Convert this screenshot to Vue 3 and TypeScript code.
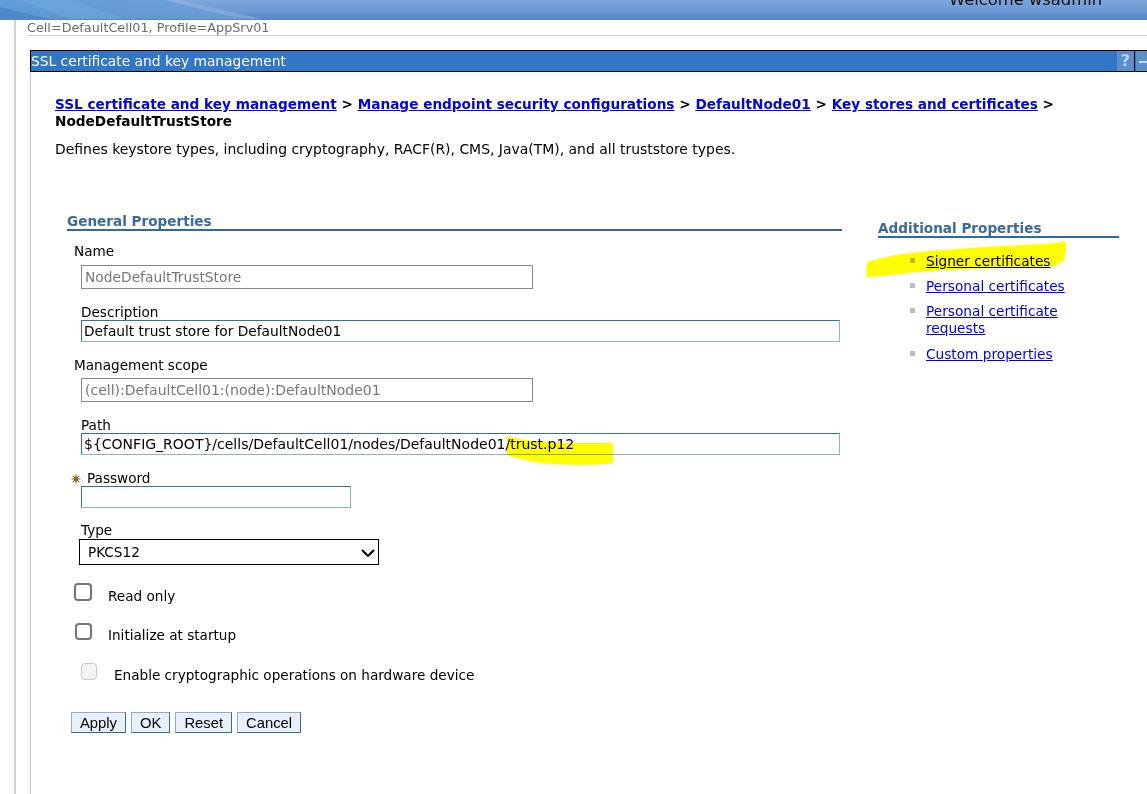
<script setup lang="ts">
const crumbs: string[] = [
  'SSL certificate and key management',
  'Manage endpoint security configurations',
  'DefaultNode01',
  'Key stores and certificates',
]
const links: string[] = ['Signer certificates', 'Personal certificates', 'Personal certificate requests', 'Custom properties']
const buttons: string[] = ['Apply', 'OK', 'Reset', 'Cancel']
</script>

<template>
  <div class="page">
    <header class="banner">
      <svg class="swoosh" width="300" height="19" viewBox="0 0 300 19" aria-hidden="true">
        <defs>
          <linearGradient id="fade" x1="0" y1="0" x2="1" y2="0">
            <stop offset="0" stop-color="#5a9ad4" />
            <stop offset="1" stop-color="#6c9fd8" />
          </linearGradient>
        </defs>
        <path d="M0 0H165L240 19H0Z" fill="url(#fade)" opacity=".75" />
        <path d="M165 0H180L262 19H240Z" fill="#9dbde4" opacity=".45" />
        <path d="M20 0H70L125 19H70Z" fill="#72aede" opacity=".4" />
        <path d="M0 7 50 19H0Z" fill="#4a86c6" opacity=".8" />
      </svg>
      <span class="welcome">Welcome wsadmin</span>
    </header>
    <div class="shell">
      <div class="context">Cell=DefaultCell01, Profile=AppSrv01</div>
      <section class="panel">
        <div class="titlebar">
          <span class="title">SSL certificate and key management</span>
          <span class="tool help">?</span>
          <span class="tool min"><i></i></span>
        </div>
        <div class="body">
          <nav class="crumbs">
            <template v-for="c in crumbs" :key="c"><a href="#">{{ c }}</a> &gt; </template>
            <span>NodeDefaultTrustStore</span>
          </nav>
          <p class="desc">Defines keystore types, including cryptography, RACF(R), CMS, Java(TM), and all truststore types.</p>
          <div class="columns">
            <form class="general" @submit.prevent>
              <h2 class="heading">General Properties</h2>
              <div class="field f-name">
                <label class="out">Name</label>
                <input class="ro" readonly value="NodeDefaultTrustStore" />
              </div>
              <div class="field f-desc">
                <label>Description</label>
                <input class="wide" value="Default trust store for DefaultNode01" />
              </div>
              <div class="field f-scope">
                <label class="out">Management scope</label>
                <input class="ro" readonly value="(cell):DefaultCell01:(node):DefaultNode01" />
              </div>
              <div class="field f-path">
                <label>Path</label>
                <input class="wide" value="${CONFIG_ROOT}/cells/DefaultCell01/nodes/DefaultNode01/trust.p12" />
              </div>
              <div class="field f-pass">
                <label class="req">
                  <svg class="star" viewBox="0 0 10 10" width="10" height="10" aria-hidden="true">
                    <path d="M5 .5V9.5M.5 5H9.5M1.8 1.8 8.2 8.2M8.2 1.8 1.8 8.2" stroke="#7a6a20" stroke-width="1.2" />
                    <circle cx="5" cy="5" r="2" fill="#7a6a20" />
                  </svg>
                  Password
                </label>
                <input class="pass" type="password" />
              </div>
              <div class="field f-type">
                <label>Type</label>
                <div class="sel-wrap">
                  <select class="sel"><option>PKCS12</option></select>
                  <svg class="chev" viewBox="0 0 14 8" width="14" height="8" aria-hidden="true">
                    <path d="M1 1 7 7 13 1" fill="none" stroke="#000" stroke-width="2" />
                  </svg>
                </div>
              </div>
              <div class="check c1"><input type="checkbox" /><span>Read only</span></div>
              <div class="check c2"><input type="checkbox" /><span>Initialize at startup</span></div>
              <div class="check c3"><input type="checkbox" disabled /><span>Enable cryptographic operations on hardware device</span></div>
              <div class="actions">
                <button v-for="b in buttons" :key="b" type="button">{{ b }}</button>
              </div>
            </form>
            <aside class="additional">
              <h2 class="heading">Additional Properties</h2>
              <ul>
                <li v-for="l in links" :key="l"><a href="#">{{ l }}</a></li>
              </ul>
            </aside>
          </div>
        </div>
      </section>
    </div>
    <svg class="marker" width="1147" height="794" viewBox="0 0 1147 794" aria-hidden="true">
      <path d="M867 262C880 258 895 255 910 253 935 250 960 249 983 247 1010 245 1040 245 1063 242L1066 241 1065 258C1064 262 1058 265 1050 267 1030 268 1005 267 983 268 960 269 940 270 917 272 900 274 885 276 870 277L866 277Z" fill="#ffff00" />
      <path d="M507 436C520 440 545 443 570 443L613 443 613 463C590 466 560 465 540 463 528 461 515 458 507 455Z" fill="#ffff00" />
    </svg>
  </div>
</template>

<style>
html, body { margin: 0; background: #fff; overflow: hidden; }
</style>

<style scoped>
.page { position: relative; width: 1147px; height: 794px; overflow: hidden; font-family: "DejaVu Sans", Verdana, sans-serif; font-size: 13px; color: #000; background: #fff; }
.banner { height: 19px; border-bottom: 1px solid #5f86bd; background: linear-gradient(180deg, #7ea6dc 0%, #6c98d4 60%, #5585c8 100%); position: relative; overflow: hidden; }
.swoosh { position: absolute; left: 0; top: 0; }
.welcome { position: absolute; left: 949px; top: -10px; font-size: 16.35px; line-height: 20px; white-space: nowrap; color: #111; }
.shell { margin-left: 14px; border-left: 2px solid #d0d0d0; height: 774px; box-sizing: border-box; padding-left: 14px; }
.context { margin-left: -3px; height: 15px; line-height: 16px; border-bottom: 1px solid #ccc; color: #6b6b6b; font-size: 12.8px; }
.panel { margin: 14px -21px 0 0; border-left: 1px solid #c8c8c8; height: 800px; }
.titlebar { display: flex; align-items: stretch; height: 20px; background: #3277c7; border: solid #000; border-width: 1px 0; margin-left: -1px; border-left: 1px solid #000; color: #fff; }
.title { flex: 1; line-height: 21px; font-size: 13.8px; }
.tool { width: 17px; background: #5b8fc9; color: #b9d2ec; font-weight: bold; text-align: center; line-height: 20px; font-size: 16px; border-left: 1px solid #3277c7; }
.help { border-right: 1px solid #000; }
.min { width: 32px; position: relative; }
.min i { position: absolute; left: 3px; top: 10px; width: 9px; height: 2px; background: #c3d8ef; }
.body { padding: 24px 28px 0 24px; }
.crumbs { width: 1010px; font-weight: bold; font-size: 13.65px; line-height: 17px; }
a { color: #0000ee; text-decoration: underline; }
.desc { margin: 10px 0 0; font-size: 13.95px; line-height: 18px; }
.columns { display: flex; margin-top: 55px; }
.general { width: 775px; margin-left: 12px; flex: none; }
.additional { width: 241px; margin-left: 36px; margin-top: 7px; flex: none; }
.heading { margin: 0; height: 16px; font-size: 13.6px; line-height: 17px; font-weight: bold; color: #3a6a9c; border-bottom: 2px solid #33699c; }
ul { list-style: none; margin: 15px 0 0; padding: 0 0 0 48px; }
li { position: relative; font-size: 13.7px; line-height: 17px; margin-bottom: 8px; width: 145px; }
li:last-child { margin-top: 9px; }
li::before { content: ""; position: absolute; left: -16px; top: 5px; width: 5px; height: 5px; background: #bdbdbd; }
.field { margin-left: 14px; }
label { display: block; font-size: 13.6px; line-height: 14px; }
label.out { margin-left: -7px; }
input { box-sizing: border-box; font: inherit; margin: 0; display: block; outline: none; }
.ro { width: 452px; height: 24px; border: 1px solid #8a8a8a; background: #fff; color: #777; padding: 0 3px; font-size: 13.8px; }
.wide { width: 759px; height: 22px; border: 1px solid #3d6d9f; border-right-color: #8fb0d0; border-bottom-color: #8fb0d0; padding: 0 2px; color: #000; font-size: 13.76px; }
.pass { width: 270px; height: 22px; border: 1px solid #3d6d9f; border-right-color: #8fb0d0; border-bottom-color: #8fb0d0; }
.f-name { margin-top: 13px; }
.f-name input { margin-top: 7px; }
.f-desc { margin-top: 16px; }
.f-desc input { margin-top: 1px; }
.f-scope { margin-top: 16px; }
.f-scope input { margin-top: 6px; font-size: 14px; }
.f-path { margin-top: 16px; }
.f-path input { margin-top: 1px; font-size: 14px; }
.f-pass { margin-top: 16px; }
.f-pass input { margin-top: 1px; }
.req { position: relative; padding-left: 6px; }
.star { position: absolute; left: -10px; top: 3px; }
.f-type { margin-top: 15px; margin-left: 12px; }
.f-type label { margin-left: 2px; }
.sel-wrap { position: relative; width: 300px; margin-top: 2px; }
.sel { display: block; box-sizing: border-box; width: 300px; height: 26px; border: 1px solid #000; background: #fff; font-family: inherit; font-size: 13.6px; padding-left: 8px; border-radius: 0; color: #000; appearance: none; -webkit-appearance: none; }
.chev { position: absolute; right: 4px; top: 10px; pointer-events: none; }
.check { display: flex; align-items: flex-start; }
.check input { appearance: none; -webkit-appearance: none; flex: none; width: 18px; height: 18px; border: 2px solid #767676; border-radius: 4px; background: #fff; }
.check span { font-size: 13.6px; line-height: 16px; }
.c1 { margin: 18px 0 0 7px; }
.c1 span { margin: 5px 0 0 16px; }
.c2 { margin: 19px 0 0 8px; }
.c2 input { width: 17px; height: 17px; }
.c2 span { margin: 4px 0 0 16px; }
.c3 { margin: 20px 0 0 14px; }
.c3 input { width: 16px; height: 17px; border: 1px solid #c9c9c9; background: #f4f4f4; }
.c3 span { margin: 4px 0 0 17px; }
.actions { display: flex; gap: 5px; margin: 29px 0 0 4px; }
button { box-sizing: border-box; height: 21px; padding: 0 8px; border: 1px solid #8eaccc; border-right-color: #33699c; border-bottom-color: #33699c; background: #e8f0fb; font-family: "Liberation Sans", Arial, sans-serif; font-size: 14.8px; line-height: 18px; color: #000; border-radius: 0; }
.marker { position: absolute; left: 0; top: 0; mix-blend-mode: multiply; pointer-events: none; }
</style>
